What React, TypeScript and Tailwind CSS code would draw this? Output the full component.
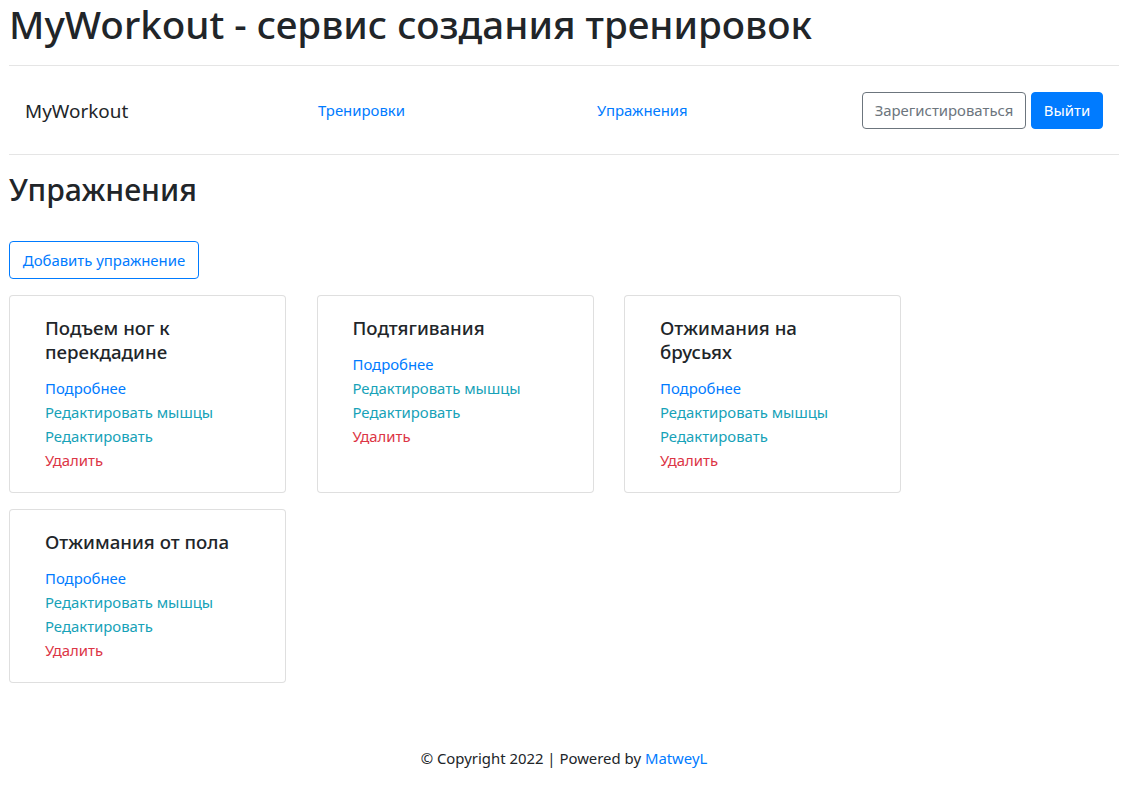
import React from "react";

const cards = [
  { title: "Подъем ног к перекдадине" },
  { title: "Подтягивания" },
  { title: "Отжимания на брусьях" },
  { title: "Отжимания от пола" },
];

function Card({ title }: { title: string }) {
  return (
    <div className="w-[277px] rounded border border-[rgba(0,0,0,0.125)] bg-white px-[35px] pt-[20px] pb-[20px]">
      <h5 className="mb-[12px] text-[18.7px] font-medium leading-[24px] text-[#212529]">{title}</h5>
      <div className="flex flex-col text-[14.9px] leading-[24px]">
        <a className="text-[#007bff]" href="#">Подробнее</a>
        <a className="text-[#17a2b8]" href="#">Редактировать мышцы</a>
        <a className="text-[#17a2b8]" href="#">Редактировать</a>
        <a className="text-[#dc3545]" href="#">Удалить</a>
      </div>
    </div>
  );
}

export default function App() {
  return (
    <div
      className="min-h-[790px] bg-white text-[#212529]"
      style={{ fontFamily: '"Noto Sans", "Open Sans", sans-serif' }}
    >
      <div className="ml-[9px] w-[1110px]">
        <h1 className="text-[38.6px] font-medium leading-[48px]">MyWorkout - сервис создания тренировок</h1>
        <hr className="mt-[17px] border-t border-[rgba(0,0,0,0.1)]" />
        <nav className="mt-[16px] flex h-[57px] items-center px-[16px]">
          <span className="w-[293px] text-[18.9px] leading-[30px]">MyWorkout</span>
          <a href="#" className="w-[279px] text-[14.9px] text-[#007bff]">Тренировки</a>
          <a href="#" className="text-[14.9px] text-[#007bff]">Упражнения</a>
          <div className="ml-auto flex gap-[5px]">
            <button className="h-[37px] w-[164px] rounded border border-[#6c757d] text-center text-[14.9px] text-[#6c757d]">
              Зарегистироваться
            </button>
            <button className="h-[37px] w-[72px] rounded border border-[#007bff] bg-[#007bff] text-center text-[14.9px] text-white">
              Выйти
            </button>
          </div>
        </nav>
        <hr className="mt-[15px] border-t border-[rgba(0,0,0,0.1)]" />
        <h2 className="mt-[16px] text-[30.2px] font-medium leading-[38px]">Упражнения</h2>
        <button className="mt-[32px] h-[38px] w-[190px] rounded border border-[#007bff] text-center text-[14.9px] text-[#007bff]">
          Добавить упражнение
        </button>
        <div className="mt-[16px] flex flex-wrap gap-x-[30.5px] gap-y-[16px]">
          {cards.map((c) => (
            <Card key={c.title} title={c.title} />
          ))}
        </div>
        <footer className="mt-[63px] text-center text-[14.9px] leading-[24px]">
          © Copyright 2022 | Powered by <a href="#" className="text-[#007bff]">MatweyL</a>
        </footer>
      </div>
    </div>
  );
}
